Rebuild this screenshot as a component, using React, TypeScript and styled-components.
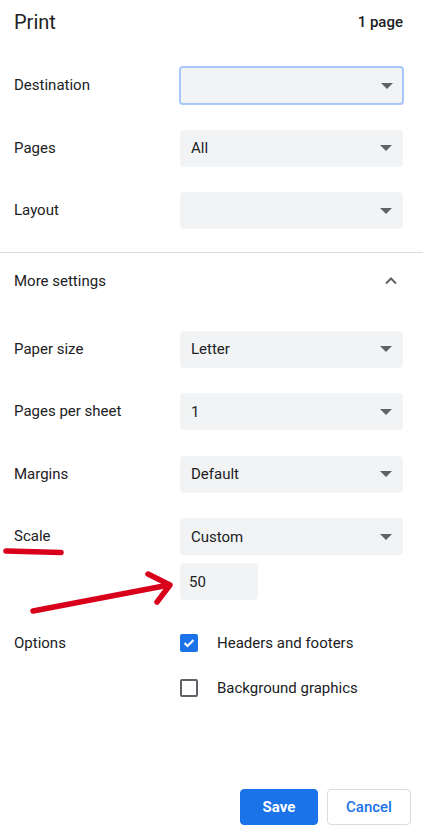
import * as React from "react";
import styled, { createGlobalStyle } from "styled-components";

const GlobalStyle = createGlobalStyle`
  html, body {
    margin: 0;
    padding: 0;
    background: #ffffff;
  }
  body {
    font-family: Roboto, "Liberation Sans", Arial, sans-serif;
    color: #202124;
  }
`;

const Root = styled.div`
  position: relative;
  display: flex;
  flex-direction: column;
  min-height: 100vh;
  width: 423px;
  box-sizing: border-box;
`;

const Header = styled.header`
  display: flex;
  align-items: center;
  justify-content: space-between;
  height: 44px;
  padding: 0 20px 0 14px;
`;

const Title = styled.h1`
  margin: 0;
  font-size: 20px;
  font-weight: 400;
  color: #202124;
`;

const PageCount = styled.span`
  font-size: 15px;
  font-weight: 500;
  color: #202124;
`;

const SettingsList = styled.div<{ $top: number; $bottom: number }>`
  display: flex;
  flex-direction: column;
  gap: 25.5px;
  padding: ${({ $top, $bottom }) => `${$top}px 20px ${$bottom}px 14px`};
`;

const Row = styled.div`
  display: flex;
  align-items: flex-start;
`;

const Label = styled.div<{ $h?: number }>`
  width: 166px;
  flex-shrink: 0;
  font-size: 15px;
  line-height: ${({ $h }) => $h ?? 37}px;
`;

const Controls = styled.div<{ $gap?: number }>`
  flex: 1;
  display: flex;
  flex-direction: column;
  gap: ${({ $gap }) => $gap ?? 8}px;
`;

const SelectBox = styled.div<{ $focused?: boolean }>`
  display: flex;
  align-items: center;
  height: ${({ $focused }) => ($focused ? 39 : 37)}px;
  box-sizing: border-box;
  padding: 0 9px 0 ${({ $focused }) => ($focused ? 8 : 9)}px;
  background: #f1f3f4;
  border-radius: 4px;
  border: 2px solid ${({ $focused }) => ($focused ? "#a8c7fa" : "transparent")};
  margin: ${({ $focused }) => ($focused ? "-1px" : "0")};
  font-size: 15px;
  color: #202124;
`;

const SelectValue = styled.span`
  flex: 1;
`;

const Caret = styled.span`
  width: 0;
  height: 0;
  border-left: 6px solid transparent;
  border-right: 6px solid transparent;
  border-top: 6px solid #5f6368;
`;

const NumberInput = styled.div`
  display: flex;
  align-items: center;
  width: 78px;
  height: 37px;
  box-sizing: border-box;
  padding: 0 9px;
  background: #f1f3f4;
  border-radius: 4px;
  font-size: 15px;
`;

const Divider = styled.hr`
  margin: 0;
  border: none;
  border-top: 1px solid #dadce0;
`;

const Expander = styled.div`
  display: flex;
  align-items: center;
  justify-content: space-between;
  height: 56px;
  padding: 0 26px 0 14px;
  font-size: 15px;
`;

const CheckRow = styled.label`
  display: flex;
  align-items: center;
  height: 35px;
  font-size: 15px;
  gap: 19px;
`;

const Box = styled.span<{ $checked?: boolean }>`
  display: flex;
  align-items: center;
  justify-content: center;
  width: 18px;
  height: 18px;
  box-sizing: border-box;
  border-radius: 2px;
  background: ${({ $checked }) => ($checked ? "#1a73e8" : "#fff")};
  border: 2px solid ${({ $checked }) => ($checked ? "#1a73e8" : "#5f6368")};
`;

const Footer = styled.footer`
  margin-top: auto;
  display: flex;
  justify-content: flex-end;
  gap: 9px;
  padding: 0 12px 15px 0;
`;

const Button = styled.button<{ $primary?: boolean }>`
  height: 36px;
  box-sizing: border-box;
  padding: 0;
  width: ${({ $primary }) => ($primary ? 78 : 84)}px;
  border-radius: 4px;
  font-family: Roboto, "Liberation Sans", Arial, sans-serif;
  font-size: 15px;
  font-weight: ${({ $primary }) => ($primary ? 700 : 500)};
  background: ${({ $primary }) => ($primary ? "#1a73e8" : "#fff")};
  color: ${({ $primary }) => ($primary ? "#fff" : "#1a73e8")};
  border: 1px solid ${({ $primary }) => ($primary ? "#1a73e8" : "#dadce0")};
`;

const Annotation = styled.svg`
  position: absolute;
  left: 0;
  top: 0;
  pointer-events: none;
`;

const Select = ({ value, focused }: { value?: string; focused?: boolean }) => (
  <SelectBox $focused={focused}>
    <SelectValue>{value}</SelectValue>
    <Caret />
  </SelectBox>
);

const Check = ({ checked, label }: { checked?: boolean; label: string }) => (
  <CheckRow>
    <Box $checked={checked}>
      {checked && (
        <svg width="12" height="10" viewBox="0 0 12 10">
          <path d="M1.5 5 L4.5 8 L10.5 2" fill="none" stroke="#fff" strokeWidth="2" />
        </svg>
      )}
    </Box>
    {label}
  </CheckRow>
);

const App = () => {
  return (
    <Root>
      <GlobalStyle />
      <Header>
        <Title>Print</Title>
        <PageCount>1 page</PageCount>
      </Header>

      <SettingsList $top={23} $bottom={22.5}>
        <Row>
          <Label>Destination</Label>
          <Controls>
            <Select focused />
          </Controls>
        </Row>
        <Row>
          <Label>Pages</Label>
          <Controls>
            <Select value="All" />
          </Controls>
        </Row>
        <Row>
          <Label>Layout</Label>
          <Controls>
            <Select />
          </Controls>
        </Row>
      </SettingsList>

      <Divider />

      <Expander>
        More settings
        <svg width="12" height="8" viewBox="0 0 12 8">
          <path d="M1 6.5 L6 1.5 L11 6.5" fill="none" stroke="#5f6368" strokeWidth="2" />
        </svg>
      </Expander>

      <SettingsList $top={22} $bottom={0}>
        <Row>
          <Label>Paper size</Label>
          <Controls>
            <Select value="Letter" />
          </Controls>
        </Row>
        <Row>
          <Label>Pages per sheet</Label>
          <Controls>
            <Select value="1" />
          </Controls>
        </Row>
        <Row>
          <Label>Margins</Label>
          <Controls>
            <Select value="Default" />
          </Controls>
        </Row>
        <Row>
          <Label>Scale</Label>
          <Controls>
            <Select value="Custom" />
            <NumberInput>50</NumberInput>
          </Controls>
        </Row>
        <Row>
          <Label $h={35}>Options</Label>
          <Controls $gap={10}>
            <Check checked label="Headers and footers" />
            <Check label="Background graphics" />
          </Controls>
        </Row>
      </SettingsList>

      <Footer>
        <Button $primary>Save</Button>
        <Button>Cancel</Button>
      </Footer>

      <Annotation width="423" height="840" viewBox="0 0 423 840">
        <g fill="none" stroke="#d9001b" strokeWidth="5.5" strokeLinecap="round" strokeLinejoin="round">
          <path d="M6 551 Q34 551.5 61 552.5" />
          <path d="M33 611 L169 585" />
          <path d="M148 574 L170 585 L157 602" />
        </g>
      </Annotation>
    </Root>
  );
};

export default App;
